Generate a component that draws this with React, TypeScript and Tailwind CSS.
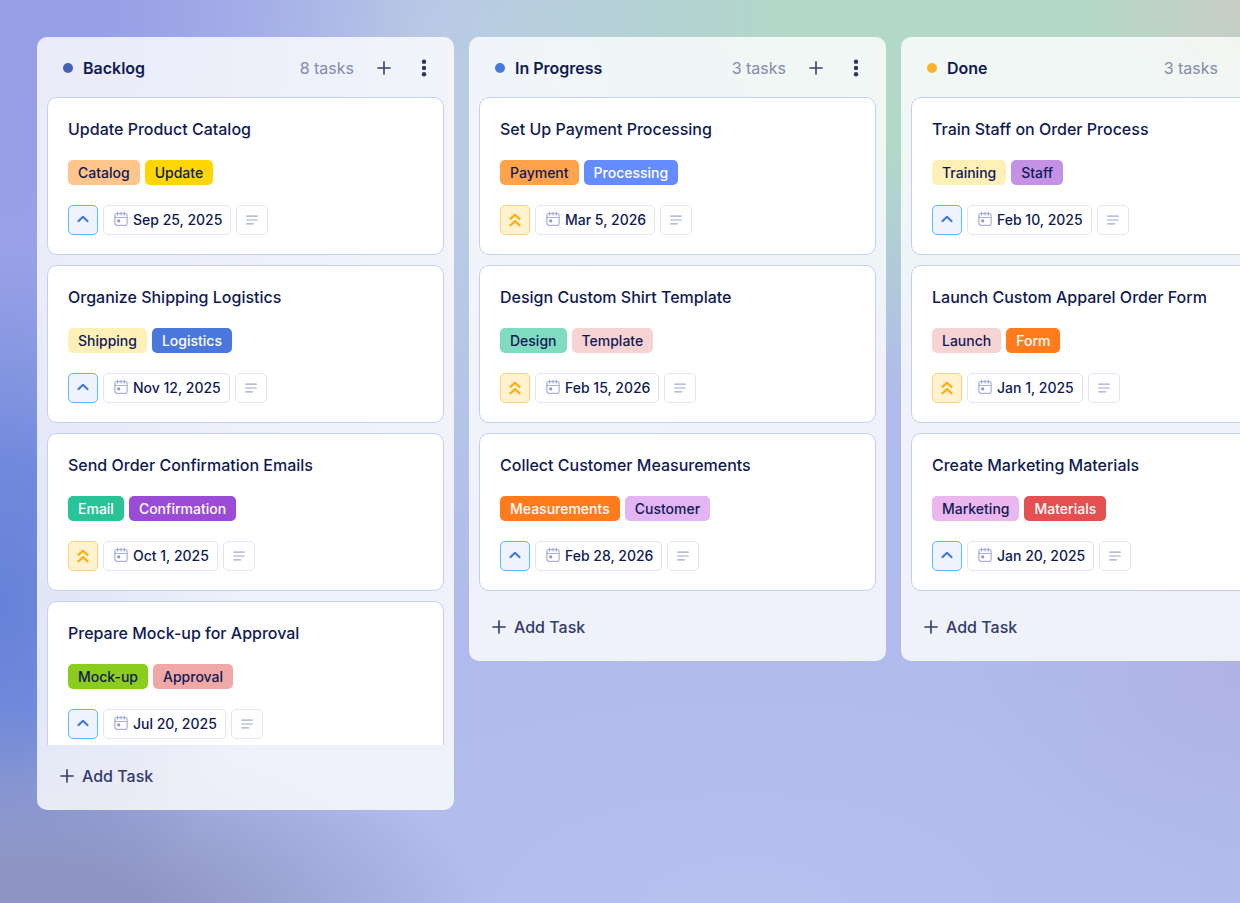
import React from 'react';

type Priority = 'medium' | 'high';
type Tag = { label: string; tone: string };
type Task = { title: string; tags: Tag[]; priority: Priority; date: string };
type ColumnData = { name: string; dot: string; count: number; tasks: Task[] };

const columns: ColumnData[] = [
  {
    name: 'Backlog',
    dot: 'bg-[#4361b5]',
    count: 8,
    tasks: [
      { title: 'Update Product Catalog', tags: [{ label: 'Catalog', tone: 'bg-[#ffc58a]' }, { label: 'Update', tone: 'bg-[#ffd600]' }], priority: 'medium', date: 'Sep 25, 2025' },
      { title: 'Organize Shipping Logistics', tags: [{ label: 'Shipping', tone: 'bg-[#fff0b8]' }, { label: 'Logistics', tone: 'bg-[#4a77dc] text-white' }], priority: 'medium', date: 'Nov 12, 2025' },
      { title: 'Send Order Confirmation Emails', tags: [{ label: 'Email', tone: 'bg-[#28c397] text-white' }, { label: 'Confirmation', tone: 'bg-[#9b4cd6] text-white' }], priority: 'high', date: 'Oct 1, 2025' },
      { title: 'Prepare Mock-up for Approval', tags: [{ label: 'Mock-up', tone: 'bg-[#8bcd1c]' }, { label: 'Approval', tone: 'bg-[#f0a8a6]' }], priority: 'medium', date: 'Jul 20, 2025' },
    ],
  },
  {
    name: 'In Progress',
    dot: 'bg-[#4a77dc]',
    count: 3,
    tasks: [
      { title: 'Set Up Payment Processing', tags: [{ label: 'Payment', tone: 'bg-[#ffa24c]' }, { label: 'Processing', tone: 'bg-[#648cff] text-white' }], priority: 'high', date: 'Mar 5, 2026' },
      { title: 'Design Custom Shirt Template', tags: [{ label: 'Design', tone: 'bg-[#7fdcc0]' }, { label: 'Template', tone: 'bg-[#f8d3d3]' }], priority: 'high', date: 'Feb 15, 2026' },
      { title: 'Collect Customer Measurements', tags: [{ label: 'Measurements', tone: 'bg-[#ff7b1c] text-white' }, { label: 'Customer', tone: 'bg-[#e4b5f3]' }], priority: 'medium', date: 'Feb 28, 2026' },
    ],
  },
  {
    name: 'Done',
    dot: 'bg-[#ffb229]',
    count: 3,
    tasks: [
      { title: 'Train Staff on Order Process', tags: [{ label: 'Training', tone: 'bg-[#fff0b8]' }, { label: 'Staff', tone: 'bg-[#c392e5]' }], priority: 'medium', date: 'Feb 10, 2025' },
      { title: 'Launch Custom Apparel Order Form', tags: [{ label: 'Launch', tone: 'bg-[#f8d3d3]' }, { label: 'Form', tone: 'bg-[#ff7b1c] text-white' }], priority: 'high', date: 'Jan 1, 2025' },
      { title: 'Create Marketing Materials', tags: [{ label: 'Marketing', tone: 'bg-[#ecb6ee]' }, { label: 'Materials', tone: 'bg-[#e4504f] text-white' }], priority: 'medium', date: 'Jan 20, 2025' },
    ],
  },
];

function PlusIcon() {
  return (
    <svg width="14" height="14" viewBox="0 0 14 14" fill="none" stroke="currentColor" strokeWidth="1.6" strokeLinecap="round" aria-hidden="true">
      <path d="M7 .9v12.2M.9 7h12.2" />
    </svg>
  );
}

function DotsIcon() {
  return (
    <svg width="6" height="18" viewBox="0 0 6 18" fill="currentColor" aria-hidden="true">
      <circle cx="3" cy="2.8" r="2.2" />
      <circle cx="3" cy="9" r="2.2" />
      <circle cx="3" cy="15.2" r="2.2" />
    </svg>
  );
}

function CalendarIcon() {
  return (
    <svg width="14" height="16" viewBox="0 0 14 16" className="-mt-0.5" fill="none" stroke="#a9afd6" strokeWidth="1.2" strokeLinecap="round" aria-hidden="true">
      <rect x=".9" y="2.6" width="12.2" height="11.8" rx="1.6" />
      <path d="M1 6.5h12M3.6 1v3M7 1v3M10.4 1v3" />
      <rect x="3.3" y="8.6" width="2.8" height="2.6" rx=".5" fill="#8f96c8" stroke="none" />
    </svg>
  );
}

function LinesIcon() {
  return (
    <svg width="12" height="10" viewBox="0 0 12 10" fill="none" stroke="#a0a6cf" strokeWidth="1.2" strokeLinecap="round" aria-hidden="true">
      <path d="M.7 1.2h10.6M.7 5h10.6M.7 8.8h6.8" />
    </svg>
  );
}

function PriorityButton({ level }: { level: Priority }) {
  if (level === 'high') {
    return (
      <button type="button" aria-label="High priority" className="flex size-[30px] items-center justify-center rounded-[5px] border border-[#ffcf85] bg-[#fff3cd]">
        <svg width="12" height="14" viewBox="0 0 12 14" fill="none" stroke="#ffa90f" strokeWidth="2.1" strokeLinejoin="round" aria-hidden="true">
          <path d="M.8 6.6 6 1.8l5.2 4.8M.8 12.9 6 8.1l5.2 4.8" />
        </svg>
      </button>
    );
  }
  return (
    <button type="button" aria-label="Medium priority" className="flex size-[30px] items-center justify-center rounded-[5px] border border-[#5cbcf9] bg-[#eef3ff] pb-0.5">
      <svg width="12" height="8" viewBox="0 0 12 8" fill="none" stroke="#4a77dc" strokeWidth="2.2" strokeLinejoin="round" aria-hidden="true">
        <path d="M.9 6.7 6 1.8l5.1 4.9" />
      </svg>
    </button>
  );
}

function TaskCard({ task }: { task: Task }) {
  return (
    <li className="flex shrink-0 flex-col gap-5 rounded-[10px] border border-[#c8cdee] bg-white px-5 pt-5 pb-[19px]">
      <h3 className="text-base leading-[22px] font-medium">{task.title}</h3>
      <ul className="flex gap-[5px]">
        {task.tags.map((tag) => (
          <li key={tag.label} className={`rounded-[5px] px-2.5 text-sm leading-[25px] font-medium ${tag.tone}`}>
            {tag.label}
          </li>
        ))}
      </ul>
      <div className="flex gap-[5px]">
        <PriorityButton level={task.priority} />
        <button type="button" className="flex h-[30px] items-center gap-[5px] rounded-[5px] border border-[#e3e5f5] pr-2 pl-2.5 text-sm font-medium">
          <CalendarIcon />
          {task.date}
        </button>
        <button type="button" aria-label="Description" className="flex h-[30px] w-8 items-center justify-center rounded-[5px] border border-[#e3e5f5]">
          <LinesIcon />
        </button>
      </div>
    </li>
  );
}

function Column({ data }: { data: ColumnData }) {
  return (
    <section className="w-[417px] shrink-0 rounded-[10px] bg-white/80 px-2.5">
      <header className="flex h-[60px] items-center pt-px pr-[17px] pl-4">
        <span className={`mr-2.5 size-2.5 rounded-full ${data.dot}`} />
        <h2 className="grow text-base font-semibold">{data.name}</h2>
        <span className="text-base text-[#8489ad]">{data.count} tasks</span>
        <button type="button" aria-label={`Add task to ${data.name}`} className="ml-[23px] text-[#39406f]">
          <PlusIcon />
        </button>
        <button type="button" aria-label={`${data.name} options`} className="ml-[30px] text-[#2b3368]">
          <DotsIcon />
        </button>
      </header>
      <ul className="flex max-h-[648px] flex-col gap-2.5 overflow-hidden pb-[5px]">
        {data.tasks.map((task) => (
          <TaskCard key={task.title} task={task} />
        ))}
      </ul>
      <button type="button" className="mt-4 mb-[19px] ml-[13px] flex h-[30px] items-center gap-2 text-base font-medium text-[#333b6d]">
        <PlusIcon />
        Add Task
      </button>
    </section>
  );
}

export default function App() {
  return (
    <main className="min-h-screen overflow-hidden bg-[#b0baec] bg-[radial-gradient(ellipse_38%_26%_at_2%_104%,#8e95c4_30%,transparent_100%),radial-gradient(ellipse_20%_40%_at_0%_67%,#6581d9_0%,#6581d9cc_40%,transparent_100%),radial-gradient(ellipse_34%_85%_at_0%_0%,#989fe6_25%,transparent_100%),radial-gradient(ellipse_16%_22%_at_102%_0%,#c8cdc4_10%,transparent_100%),radial-gradient(ellipse_45%_46%_at_82%_0%,#b2d9c7_40%,transparent_100%),radial-gradient(ellipse_30%_55%_at_42%_15%,#b9cce3_20%,transparent_100%),radial-gradient(ellipse_22%_22%_at_100%_75%,#b0ace488_0%,transparent_100%),radial-gradient(ellipse_50%_30%_at_60%_100%,#b7c0ef_0%,transparent_100%)] p-[37px] font-['Inter',sans-serif] text-[#0f1a55]">
      <div className="flex items-start gap-[15px]">
        {columns.map((column) => (
          <Column key={column.name} data={column} />
        ))}
      </div>
    </main>
  );
}
